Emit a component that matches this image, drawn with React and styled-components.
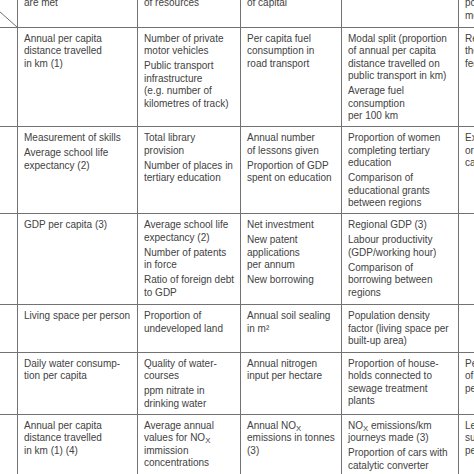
import React from 'react';
import styled, { createGlobalStyle } from 'styled-components';

const GlobalStyle = createGlobalStyle`
  html, body {
    margin: 0;
    padding: 0;
    background: #ffffff;
  }
  body {
    font-family: "Liberation Sans", Arial, sans-serif;
  }
`;

const Viewport = styled.div`
  width: 474px;
  height: 474px;
  overflow: hidden;
  background: #ffffff;
`;

const widths = [54, 120, 103, 101, 117, 120];

const Table = styled.table`
  border-collapse: collapse;
  table-layout: fixed;
  width: ${widths.reduce((a, b) => a + b, 0)}px;
  margin: -21px 0 0 -37px;
  color: #424242;
  font-size: 10px;
  line-height: 12.4px;
`;

const Row = styled.tr`
  height: ${(p) => p.$h}px;
`;

const Cell = styled.td`
  border: 1px solid #727272;
  padding: 5px 2px 4px 6px;
  vertical-align: top;
  white-space: nowrap;
  overflow: hidden;
  position: relative;
`;

const Corner = styled.svg`
  position: absolute;
  inset: 0;
  width: 100%;
  height: 100%;
`;

const Item = styled.div`
  & + & {
    margin-top: 2.6px;
  }
`;

const Line = styled.div``;

const Sub = styled.sub`
  font-size: 0.78em;
  line-height: 0;
  vertical-align: -0.3em;
`;

const NOx = () => (
  <>
    NO<Sub>X</Sub>
  </>
);

const header = [
  [['Degree to which needs', 'are met']],
  [['Efficient use', 'of resources']],
  [['Preservation', 'of capital']],
  [['Distribution']],
  [['Participation and', 'political', 'mechanisms']],
];

const rows = [
  {
    h: 99,
    cells: [
      [['Annual per capita', 'distance travelled', 'in km (1)']],
      [['Number of private', 'motor vehicles'], ['Public transport', 'infrastructure', '(e.g. number of', 'kilometres of track)']],
      [['Per capita fuel', 'consumption in', 'road transport']],
      [['Modal split (proportion', 'of annual per capita', 'distance travelled on', 'public transport in km)'], ['Average fuel', 'consumption', 'per 100 km']],
      [['Representation of', 'the public in', 'federal planning']],
    ],
  },
  {
    h: 87,
    cells: [
      [['Measurement of skills'], ['Average school life', 'expectancy (2)']],
      [['Total library', 'provision'], ['Number of places in', 'tertiary education']],
      [['Annual number', 'of lessons given'], ['Proportion of GDP', 'spent on education']],
      [['Proportion of women', 'completing tertiary', 'education'], ['Comparison of', 'educational grants', 'between regions']],
      [['Expenditure', 'or grants for', 'career training']],
    ],
  },
  {
    h: 91,
    cells: [
      [['GDP per capita (3)']],
      [['Average school life', 'expectancy (2)'], ['Number of patents', 'in force'], ['Ratio of foreign debt', 'to GDP']],
      [['Net investment'], ['New patent', 'applications', 'per annum'], ['New borrowing']],
      [['Regional GDP (3)'], ['Labour productivity', '(GDP/working hour)'], ['Comparison of', 'borrowing between', 'regions']],
      [],
    ],
  },
  {
    h: 46,
    cells: [
      [['Living space per person']],
      [['Proportion of', 'undeveloped land']],
      [['Annual soil sealing', 'in m²']],
      [['Population density', 'factor (living space per', 'built-up area)']],
      [],
    ],
  },
  {
    h: 61,
    cells: [
      [['Daily water consump-', 'tion per capita']],
      [['Quality of water-', 'courses'], ['ppm nitrate in', 'drinking water']],
      [['Annual nitrogen', 'input per hectare']],
      [['Proportion of house-', 'holds connected to', 'sewage treatment', 'plants']],
      [['Percentage', 'of households', 'per region']],
    ],
  },
  {
    h: 72,
    cells: [
      [['Annual per capita', 'distance travelled', 'in km (1) (4)']],
      [['Average annual', <>values for <NOx /></>, 'immission', 'concentrations']],
      [[<>Annual <NOx /></>, 'emissions in tonnes', '(3)']],
      [[<><NOx /> emissions/km</>, 'journeys made (3)'], ['Proportion of cars with', 'catalytic converter']],
      [['Level of', 'subsidies', 'per capita']],
    ],
  },
];

const CellContent = ({ items }) =>
  items.map((lines, i) => (
    <Item key={i}>
      {lines.map((line, j) => (
        <Line key={j}>{line}</Line>
      ))}
    </Item>
  ));

const App = () => (
  <Viewport>
    <GlobalStyle />
    <Table>
      <colgroup>
        {widths.map((w, i) => (
          <col key={i} style={{ width: w }} />
        ))}
      </colgroup>
      <tbody>
        <Row $h={48}>
          <Cell>
            <Corner viewBox="0 0 100 100" preserveAspectRatio="none">
              <line x1="0" y1="0" x2="100" y2="100" stroke="#727272" strokeWidth="1" vectorEffect="non-scaling-stroke" />
            </Corner>
          </Cell>
          {header.map((items, i) => (
            <Cell key={i}>
              <CellContent items={items} />
            </Cell>
          ))}
        </Row>
        {rows.map((row, r) => (
          <Row key={r} $h={row.h}>
            <Cell />
            {row.cells.map((items, c) => (
              <Cell key={c}>
                <CellContent items={items} />
              </Cell>
            ))}
          </Row>
        ))}
      </tbody>
    </Table>
  </Viewport>
);

export default App;
